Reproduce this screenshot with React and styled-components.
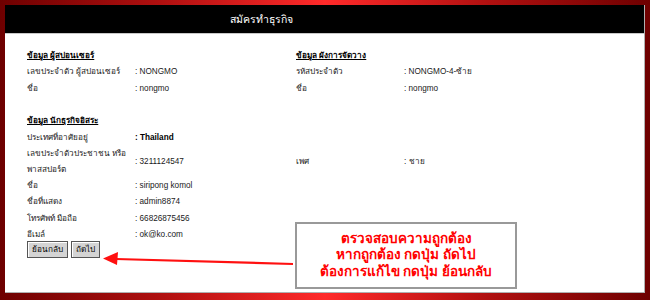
import React from "react";
import styled, { createGlobalStyle } from "styled-components";

const Global = createGlobalStyle`
  html, body { margin: 0; padding: 0; }
  body {
    width: 650px;
    height: 300px;
    overflow: hidden;
    font-family: Tahoma, "Liberation Sans", "DejaVu Sans", sans-serif;
  }
`;

const Frame = styled.div`
  width: 650px;
  height: 300px;
  box-sizing: border-box;
  padding: 5px 5px 7px 5px;
  background: linear-gradient(to right, #6e0000 0%, #b01010 25%, #ff2a2a 50%, #b01010 75%, #6e0000 100%);
`;

const Panel = styled.div`
  position: relative;
  height: 100%;
  background: #fff;
  border-right: 1px solid #b0b0b0;
  border-bottom: 1px solid #b0b0b0;
  box-sizing: border-box;
`;

const Header = styled.div`
  height: 28px;
  background: #000;
  border-bottom: 1px solid #c8c8c8;
  color: #fff;
  font-size: 10.5px;
  display: flex;
  align-items: center;
  justify-content: center;
  padding-right: 126px;
`;

const Body = styled.div`
  padding: 14px 22px 0 22px;
  font-size: 8.2px;
  color: #1a1a1a;
`;

const Table = styled.table`
  border-collapse: collapse;
  td {
    padding: 0;
    height: 16.3px;
    vertical-align: middle;
    line-height: 16px;
    white-space: nowrap;
  }
`;

const Label = styled.td`
  width: ${(p) => p.$w || 108}px;
`;

const Value = styled.td`
  width: ${(p) => p.$w || 161}px;
  font-weight: ${(p) => (p.$bold ? "bold" : "normal")};
  color: ${(p) => (p.$bold ? "#000" : "#1a1a1a")};
`;

const Title = styled.td`
  font-weight: bold;
  text-decoration: underline;
  color: #000;
`;

const Buttons = styled.div`
  display: flex;
  gap: 3px;
  margin-top: -2px;
`;

const Button = styled.button`
  font-family: inherit;
  font-size: 8.2px;
  color: #000;
  background: #d4d4d4;
  border: 1px solid #555;
  box-shadow: inset 1px 1px 0 #fff;
  padding: 0 4px;
  height: 17px;
`;

const Callout = styled.div`
  position: absolute;
  left: 290px;
  top: 217px;
  width: 218px;
  height: 63px;
  border: 2px solid #999;
  background: #fff;
  color: #ff0000;
  font-weight: bold;
  font-size: 13.5px;
  line-height: 16.5px;
  display: flex;
  flex-direction: column;
  align-items: center;
  justify-content: center;
  text-align: center;
`;

const Arrow = styled.svg`
  position: absolute;
  left: 98px;
  top: 244px;
`;

export default function App() {
  return (
    <>
      <Global />
      <Frame>
        <Panel>
          <Header>สมัครทำธุรกิจ</Header>
          <Body>
            <Table>
              <tbody>
                <tr>
                  <Title colSpan={2}>ข้อมูล ผู้สปอนเซอร์</Title>
                  <Title colSpan={2}>ข้อมูล ผังการจัดวาง</Title>
                </tr>
                <tr>
                  <Label>เลขประจำตัว ผู้สปอนเซอร์</Label>
                  <Value>: NONGMO</Value>
                  <Label>รหัสประจำตัว</Label>
                  <Value>: NONGMO-4-ซ้าย</Value>
                </tr>
                <tr>
                  <Label>ชื่อ</Label>
                  <Value>: nongmo</Value>
                  <Label>ชื่อ</Label>
                  <Value>: nongmo</Value>
                </tr>
                <tr>
                  <td colSpan={4} />
                </tr>
                <tr>
                  <Title colSpan={4}>ข้อมูล นักธุรกิจอิสระ</Title>
                </tr>
                <tr>
                  <Label>ประเทศที่อาศัยอยู่</Label>
                  <Value $bold>: Thailand</Value>
                  <Label />
                  <Value />
                </tr>
                <tr>
                  <Label>
                    เลขประจำตัวประชาชน หรือ
                    <br />
                    พาสสปอร์ต
                  </Label>
                  <Value>: 3211124547</Value>
                  <Label>เพศ</Label>
                  <Value>: ชาย</Value>
                </tr>
                <tr>
                  <Label>ชื่อ</Label>
                  <Value>: siripong komol</Value>
                  <Label />
                  <Value />
                </tr>
                <tr>
                  <Label>ชื่อที่แสดง</Label>
                  <Value>: admin8874</Value>
                  <Label />
                  <Value />
                </tr>
                <tr>
                  <Label>โทรศัพท์ มือถือ</Label>
                  <Value>: 66826875456</Value>
                  <Label />
                  <Value />
                </tr>
                <tr>
                  <Label>อีเมล์</Label>
                  <Value>: ok@ko.com</Value>
                  <Label />
                  <Value />
                </tr>
              </tbody>
            </Table>
            <Buttons>
              <Button>ย้อนกลับ</Button>
              <Button>ถัดไป</Button>
            </Buttons>
          </Body>
          <Arrow width="190" height="18" viewBox="0 0 190 18">
            <line x1="13" y1="10" x2="190" y2="15" stroke="#ff1010" strokeWidth="2.2" />
            <polygon points="0,9.5 15,3 14,16" fill="#ff1010" />
          </Arrow>
          <Callout>
            <div>ตรวจสอบความถูกต้อง</div>
            <div>หากถูกต้อง กดปุ่ม ถัดไป</div>
            <div>ต้องการแก้ไข กดปุ่ม ย้อนกลับ</div>
          </Callout>
        </Panel>
      </Frame>
    </>
  );
}
